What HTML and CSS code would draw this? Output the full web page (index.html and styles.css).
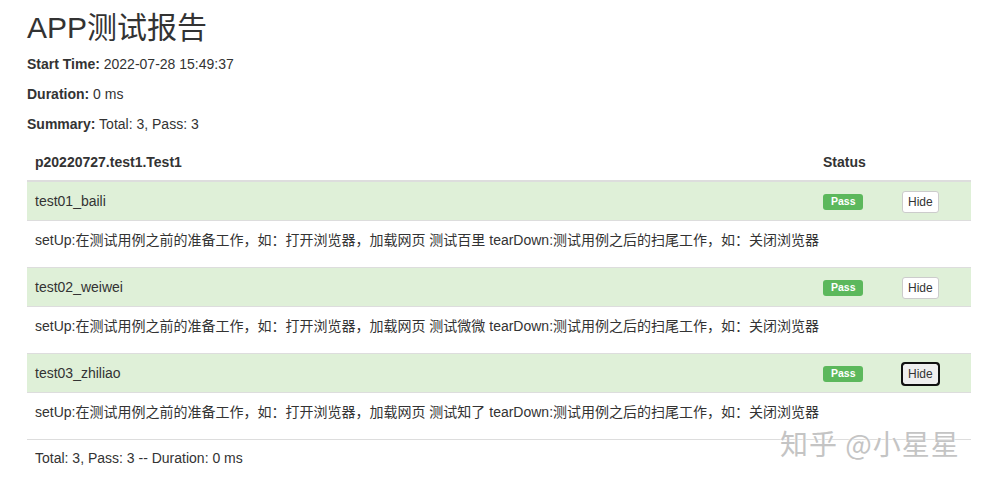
FILE: index.html
```html
<!DOCTYPE html>
<html lang="zh-CN">
<head>
<meta charset="utf-8">
<title>APP测试报告</title>
<link rel="stylesheet" href="styles.css">
</head>
<body>
<div class="container">
  <h2 class="title">APP测试报告</h2>
  <p class="meta"><strong>Start Time:</strong> 2022-07-28 15:49:37</p>
  <p class="meta"><strong>Duration:</strong> 0 ms</p>
  <p class="meta"><strong>Summary:</strong> Total: 3, Pass: 3</p>
  <table class="report">
    <thead>
      <tr>
        <th class="c-name">p20220727.test1.Test1</th>
        <th class="c-status">Status</th>
        <th class="c-act"></th>
      </tr>
    </thead>
    <tbody>
      <tr class="case">
        <td>test01_baili</td>
        <td><span class="badge">Pass</span></td>
        <td><button class="btn">Hide</button></td>
      </tr>
      <tr class="desc">
        <td colspan="3">setUp:在测试用例之前的准备工作，如：打开浏览器，加载网页 测试百里 tearDown:测试用例之后的扫尾工作，如：关闭浏览器</td>
      </tr>
      <tr class="case">
        <td>test02_weiwei</td>
        <td><span class="badge">Pass</span></td>
        <td><button class="btn">Hide</button></td>
      </tr>
      <tr class="desc">
        <td colspan="3">setUp:在测试用例之前的准备工作，如：打开浏览器，加载网页 测试微微 tearDown:测试用例之后的扫尾工作，如：关闭浏览器</td>
      </tr>
      <tr class="case">
        <td>test03_zhiliao</td>
        <td><span class="badge">Pass</span></td>
        <td><button class="btn focused">Hide</button></td>
      </tr>
      <tr class="desc">
        <td colspan="3">setUp:在测试用例之前的准备工作，如：打开浏览器，加载网页 测试知了 tearDown:测试用例之后的扫尾工作，如：关闭浏览器</td>
      </tr>
    </tbody>
    <tfoot>
      <tr class="foot">
        <td colspan="3">Total: 3, Pass: 3 -- Duration: 0 ms</td>
      </tr>
    </tfoot>
  </table>
</div>
<div class="watermark">知乎 @小星星</div>
</body>
</html>
```

FILE: styles.css
```css
html, body {
  margin: 0;
  padding: 0;
  background: #ffffff;
}
body {
  font-family: "Liberation Sans", Arial, "Noto Sans CJK SC", sans-serif;
  font-size: 14px;
  line-height: 20px;
  color: #333333;
  position: relative;
  width: 984px;
  height: 484px;
  overflow: hidden;
}
.container {
  padding: 0 13px 0 27px;
}
.title {
  font-size: 30px;
  font-weight: normal;
  line-height: 33px;
  margin: 11px 0 10px 0;
  color: #333333;
}
.meta {
  margin: 0 0 10px 0;
  line-height: 20px;
}
.meta strong {
  font-weight: bold;
}
.report {
  width: 944px;
  border-collapse: collapse;
  border-spacing: 0;
  margin-top: 6px;
}
.report th {
  text-align: left;
  font-weight: bold;
  padding: 8px 8px;
  line-height: 20px;
  border-bottom: 2px solid #dddddd;
  vertical-align: bottom;
}
.c-status { width: 62px; padding-left: 9px; }
.c-act { width: 62px; }
.report td {
  padding: 8px 8px;
  line-height: 20px;
  vertical-align: top;
  border-top: 1px solid #dddddd;
}
.case td {
  background: #dff0d8;
  height: 22px;
  padding-top: 9px;
  padding-bottom: 7px;
}
.desc td {
  height: 30px;
  padding-top: 9px;
  padding-bottom: 7px;
}
.report thead + tbody tr:first-child td {
  border-top: 0;
}
.foot td {
  padding-top: 8px;
  border-top: 1px solid #dddddd;
}
.badge {
  display: inline-block;
  background: #5cb85c;
  color: #ffffff;
  font-size: 10.5px;
  font-weight: bold;
  line-height: 1;
  padding: 2px 7px 3px 8px;
  border-radius: 3px;
  position: relative;
  top: -1px;
}
.btn {
  display: block;
  box-sizing: border-box;
  height: 22px;
  font-family: "Liberation Sans", Arial, sans-serif;
  font-size: 12px;
  line-height: 16px;
  color: #333333;
  background: #ffffff;
  border: 1px solid #cccccc;
  border-radius: 3px;
  padding: 2px 5px;
  margin: 0 0 0 1px;
}
.btn.focused {
  border: 1px solid #111111;
  outline: 2px solid #111111;
  outline-offset: -1px;
  background: #efefef;
}
.watermark {
  position: absolute;
  left: 780px;
  top: 424px;
  font-family: "Noto Sans CJK SC", sans-serif;
  font-size: 28px;
  line-height: 38px;
  letter-spacing: 1px;
  color: #c4c4c4;
  text-shadow: 0 0 1px #ffffff, 0 0 2px #ffffff;
}
```
